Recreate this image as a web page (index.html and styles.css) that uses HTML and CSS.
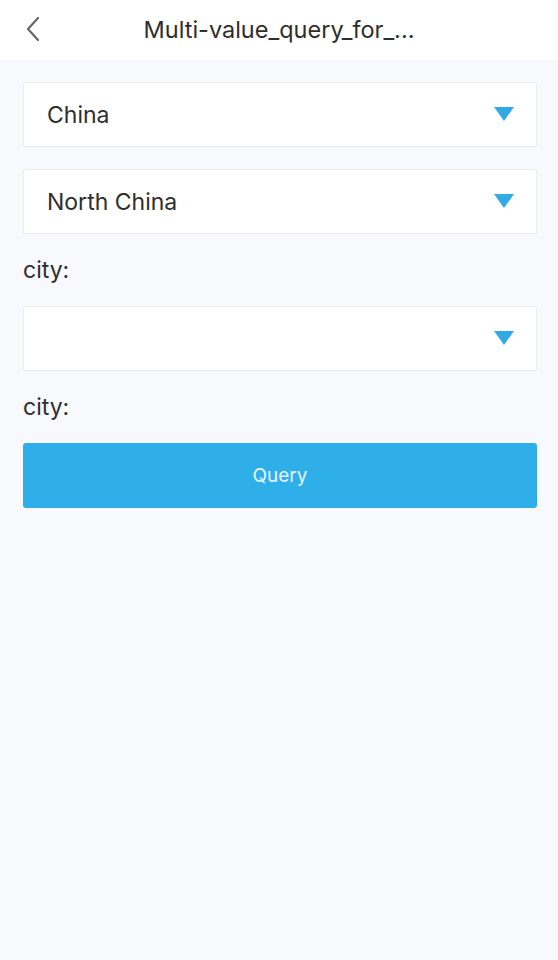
FILE: index.html
```html
<!DOCTYPE html>
<html lang="en">
<head>
<meta charset="utf-8">
<title>Multi-value query</title>
<link rel="stylesheet" href="styles.css">
</head>
<body>
<header class="topbar">
  <span class="back">
    <svg width="16" height="26" viewBox="0 0 16 26"><path d="M13 2 L3 13 L13 24" fill="none" stroke="#666" stroke-width="2.2" stroke-linecap="round" stroke-linejoin="round"/></svg>
  </span>
  <h1 class="title">Multi-value_query_for_...</h1>
</header>
<main class="content">
  <div class="select"><span class="select-text">China</span><span class="caret"></span></div>
  <div class="select"><span class="select-text">North China</span><span class="caret"></span></div>
  <div class="label">city:</div>
  <div class="select"><span class="select-text"></span><span class="caret"></span></div>
  <div class="label">city:</div>
  <button class="query-btn">Query</button>
</main>
</body>
</html>
```
FILE: styles.css
```css
* { box-sizing: border-box; }
html, body { margin: 0; padding: 0; }
body {
  width: 558px;
  height: 960px;
  background: #f8f9fc;
  font-family: Inter, Roboto, "Noto Sans", sans-serif;
  color: #2e2e2e;
}
.topbar {
  height: 60px;
  background: #ffffff;
  display: flex;
  align-items: center;
  justify-content: center;
  position: relative;
}
.back {
  position: absolute;
  left: 25px;
  top: 16px;
  display: flex;
}
.title {
  margin: 0 0 2px 0;
  font-size: 23.5px;
  font-weight: 400;
  color: #2e2e2e;
}
.content {
  padding: 22px 21px 0 23px;
  display: flex;
  flex-direction: column;
  gap: 22px;
}
.select {
  height: 65px;
  background: #fff;
  border: 1px solid #ececee;
  border-radius: 2px;
  display: flex;
  align-items: center;
  justify-content: space-between;
  padding: 0 22px 0 23px;
}
.select-text {
  font-size: 23px;
  color: #2e2e2e;
  padding-top: 1px;
}
.caret {
  width: 0;
  height: 0;
  border-left: 10px solid transparent;
  border-right: 10px solid transparent;
  border-top: 14px solid #35a9e3;
  margin-top: -2px;
}
.label {
  height: 28px;
  line-height: 28px;
  font-size: 23px;
  color: #2e2e2e;
}
.query-btn {
  height: 65px;
  border: none;
  border-radius: 3px;
  background: #2fafe9;
  color: #e4f5fd;
  font-family: Inter, Roboto, "Noto Sans", sans-serif;
  font-size: 19px;
}
```
